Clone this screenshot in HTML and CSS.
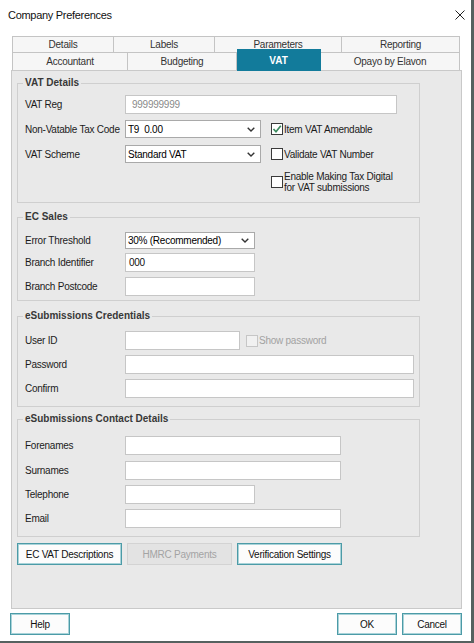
FILE: index.html
```html
<!DOCTYPE html>
<html>
<head>
<meta charset="utf-8">
<title>Company Preferences</title>
<link rel="stylesheet" href="styles.css">
</head>
<body>
<div class="window">
  <div class="titlebar">
    <span class="title">Company Preferences</span>
    <svg class="close" viewBox="0 0 10 10"><path d="M0.5 0.5 L9.5 9.5 M9.5 0.5 L0.5 9.5" stroke="#222" stroke-width="1" fill="none"/></svg>
  </div>

  <div class="tabs">
    <div class="tabrow row1">
      <div class="tab">Details</div>
      <div class="tab">Labels</div>
      <div class="tab">Parameters</div>
      <div class="tab">Reporting</div>
    </div>
    <div class="tabrow row2">
      <div class="tab">Accountant</div>
      <div class="tab">Budgeting</div>
      <div class="tab active">VAT</div>
      <div class="tab">Opayo by Elavon</div>
    </div>
  </div>

  <div class="panel">
    <fieldset class="group g-vat">
      <legend>VAT Details</legend>
      <div class="row mt5">
        <span class="lbl">VAT Reg</span>
        <div class="field w272 muted pad6">999999999</div>
      </div>
      <div class="row mt6">
        <span class="lbl">Non-Vatable Tax Code</span>
        <div class="select w136"><span>T9&nbsp;&nbsp;0.00</span><svg class="chev" viewBox="0 0 8 5"><path d="M0.7 0.7 L4 4 L7.3 0.7" stroke="#333" stroke-width="1.4" fill="none"/></svg></div>
        <div class="check"><span class="box"><svg viewBox="0 0 10 10"><path d="M1.5 5 L4 7.8 L8.8 1.8" stroke="#3b8a5e" stroke-width="1.7" fill="none"/></svg></span><span>Item VAT Amendable</span></div>
      </div>
      <div class="row mt7">
        <span class="lbl">VAT Scheme</span>
        <div class="select w136"><span>Standard VAT</span><svg class="chev" viewBox="0 0 8 5"><path d="M0.7 0.7 L4 4 L7.3 0.7" stroke="#333" stroke-width="1.4" fill="none"/></svg></div>
        <div class="check"><span class="box"></span><span>Validate VAT Number</span></div>
      </div>
      <div class="row mt8 mtd">
        <div class="check"><span class="box"></span><span class="two">Enable Making Tax Digital<br>for VAT submissions</span></div>
      </div>
    </fieldset>

    <fieldset class="group g-ec">
      <legend>EC Sales</legend>
      <div class="row mt8">
        <span class="lbl">Error Threshold</span>
        <div class="select w130 h17"><span>30% (Recommended)</span><svg class="chev" viewBox="0 0 8 5"><path d="M0.7 0.7 L4 4 L7.3 0.7" stroke="#333" stroke-width="1.4" fill="none"/></svg></div>
      </div>
      <div class="row mt4">
        <span class="lbl">Branch Identifier</span>
        <div class="field w130">000</div>
      </div>
      <div class="row mt5">
        <span class="lbl">Branch Postcode</span>
        <div class="field w130"></div>
      </div>
    </fieldset>

    <fieldset class="group g-cred">
      <legend>eSubmissions Credentials</legend>
      <div class="row mt8">
        <span class="lbl">User ID</span>
        <div class="field w115"></div>
        <div class="check disabled"><span class="box"></span><span>Show password</span></div>
      </div>
      <div class="row mt5">
        <span class="lbl">Password</span>
        <div class="field w289"></div>
      </div>
      <div class="row mt5">
        <span class="lbl">Confirm</span>
        <div class="field w289"></div>
      </div>
    </fieldset>

    <fieldset class="group g-contact">
      <legend>eSubmissions Contact Details</legend>
      <div class="row mt10">
        <span class="lbl">Forenames</span>
        <div class="field w216"></div>
      </div>
      <div class="row mt6">
        <span class="lbl">Surnames</span>
        <div class="field w216"></div>
      </div>
      <div class="row mt5">
        <span class="lbl">Telephone</span>
        <div class="field w130"></div>
      </div>
      <div class="row mt5">
        <span class="lbl">Email</span>
        <div class="field w216"></div>
      </div>
    </fieldset>

    <div class="actions">
      <div class="btn wide">EC VAT Descriptions</div>
      <div class="btn wide disabled">HMRC Payments</div>
      <div class="btn wide">Verification Settings</div>
    </div>
  </div>

  <div class="footer">
    <div class="btn small">Help</div>
    <div class="spacer"></div>
    <div class="btn small">OK</div>
    <div class="btn small">Cancel</div>
  </div>
</div>
</body>
</html>
```

FILE: styles.css
```css
* { box-sizing: border-box; }

body {
  margin: 0;
  background: #56615f;
  font-family: "Liberation Sans", Arial, sans-serif;
  font-size: 10px;
  letter-spacing: -0.25px;
  color: #1b1b1b;
}

.window {
  width: 471px;
  height: 641px;
  background: #ffffff;
  display: flex;
  flex-direction: column;
}

.titlebar {
  height: 29px;
  flex: none;
  display: flex;
  align-items: center;
  justify-content: space-between;
  padding: 0 6px 0 8px;
  font-size: 11px;
  letter-spacing: -0.3px;
  color: #111;
}

.close { width: 10px; height: 10px; display: block; }

.tabs {
  margin: 7px 0 0 12px;
  width: 448px;
  flex: none;
}

.tabrow { display: grid; }
.row1 { grid-template-columns: 102px 101px 127px 118px; height: 16px; }
.row2 { grid-template-columns: 116px 109px 84px 139px; height: 18px; }

.tab {
  display: flex;
  align-items: center;
  justify-content: center;
  background: #f6f6f6;
  border-top: 1px solid #c4c4c4;
  border-right: 1px solid #c4c4c4;
  color: #333;
  white-space: nowrap;
}
.row1 .tab { padding-bottom: 1px; }
.tab:first-child { border-left: 1px solid #c4c4c4; }

.tab.active {
  position: relative;
  margin-top: -3px;
  margin-bottom: -1px;
  background: #127b9b;
  border-color: #127b9b;
  color: #fff;
  font-weight: bold;
  letter-spacing: 0;
}

.panel {
  margin-left: 11px;
  width: 451px;
  height: 539px;
  flex: none;
  background: #e9e9e9;
  border: 1px solid #c9c9c9;
  padding: 5px 0 0 5px;
  display: flex;
  flex-direction: column;
}

.group {
  margin: 0;
  padding: 0 0 8px 7px;
  border: 1px solid #cfcfcf;
  width: 403px;
  min-width: 0;
}
.g-vat { padding-bottom: 9px; }
.g-ec { margin-top: 7px; padding-bottom: 4px; }
.g-cred { margin-top: 8px; }
.g-contact { margin-top: 5px; }

.group legend {
  font-weight: bold;
  line-height: 14px;
  padding: 0 2px;
  margin-left: -2px;
  letter-spacing: 0;
  color: #383838;
}

.row { display: flex; align-items: center; }
.mt4 { margin-top: 4px; }
.mt5 { margin-top: 5px; }
.mt6 { margin-top: 6px; }
.mt7 { margin-top: 7px; }
.mt8 { margin-top: 8px; }
.mt10 { margin-top: 10px; }

.lbl { width: 100px; flex: none; white-space: nowrap; }

.field {
  height: 19px;
  flex: none;
  background: #fff;
  border: 1px solid #c6c6c6;
  padding-left: 3px;
  display: flex;
  align-items: center;
  color: #111;
}
.field.muted { color: #8a8a8a; }
.field.pad6 { padding-left: 6px; }

.select {
  height: 18px;
  flex: none;
  background: #fff;
  border: 1px solid #a9a9a9;
  display: flex;
  align-items: center;
  justify-content: space-between;
  padding: 0 5px 0 2px;
  color: #000;
}
.select.h17 { height: 17px; }
.chev { width: 8px; height: 5px; display: block; }

.w272 { width: 272px; }
.w136 { width: 136px; }
.w130 { width: 130px; }
.w115 { width: 115px; }
.w289 { width: 289px; }
.w216 { width: 216px; }

.check { display: flex; align-items: center; margin-left: 10px; white-space: nowrap; }
.box {
  width: 12px;
  height: 12px;
  flex: none;
  border: 1px solid #3a3a3a;
  background: #fff;
  margin-right: 1px;
  display: flex;
}
.box svg { width: 10px; height: 10px; display: block; }
.check.disabled { margin-left: 6px; color: #a2a2a2; }
.check.disabled .box { border-color: #c6c6c6; background: #f1f1f1; }

.mtd { padding-left: 236px; height: 22px; }
.two { line-height: 11px; }

.actions {
  display: flex;
  gap: 5px;
  margin-top: 6px;
}

.btn {
  height: 22px;
  flex: none;
  display: flex;
  align-items: center;
  justify-content: center;
  background: #fcfcfc;
  border: 1px solid #4c9ba7;
  box-shadow: inset 0 0 0 1px #a9d3d9;
  color: #111;
  white-space: nowrap;
}
.btn.wide { width: 105px; }
.btn.small { width: 60px; }
.btn.disabled {
  background: #e3e3e3;
  border-color: #d3d3d3;
  box-shadow: none;
  color: #a4a4a4;
}

.footer {
  display: flex;
  gap: 5px;
  margin-top: 4px;
  padding: 0 9px 0 10px;
}
.spacer { flex: 1; }
```
